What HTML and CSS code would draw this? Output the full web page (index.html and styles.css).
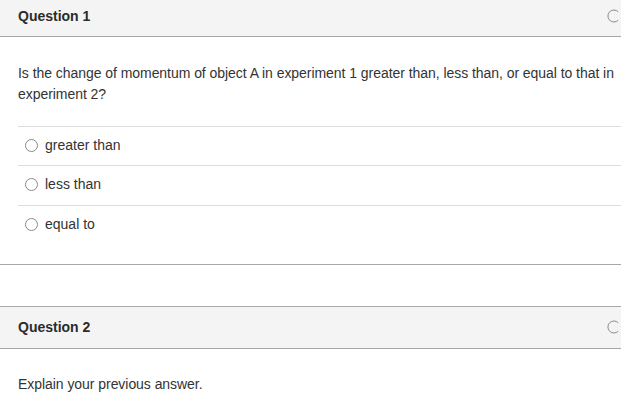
FILE: index.html
```html
<!DOCTYPE html>
<html lang="en">
  <head>
    <meta charset="UTF-8" />
    <title>Quiz</title>
    <link rel="stylesheet" href="styles.css">
  </head>
  <body>
    <div class="question">
      <div class="q-head">
        <span>Question 1</span>
        <svg class="q-icon" width="14" height="14" viewBox="0 0 14 14">
          <path d="M11.2 2.8 A6 6 0 1 0 11.2 11.2" fill="none" stroke="#8a8a8a" stroke-width="1" />
        </svg>
      </div>
      <div class="q-body">
        <p class="q-text">Is the change of momentum of object A in experiment 1 greater than, less than, or equal to that in experiment 2?</p>
        <ul class="options">
          <li class="option"><span class="radio"></span>greater than</li>
          <li class="option"><span class="radio"></span>less than</li>
          <li class="option"><span class="radio"></span>equal to</li>
        </ul>
      </div>
    </div>

    <div class="question second">
      <div class="q-head">
        <span>Question 2</span>
        <svg class="q-icon" width="14" height="14" viewBox="0 0 14 14">
          <path d="M11.2 2.8 A6 6 0 1 0 11.2 11.2" fill="none" stroke="#8a8a8a" stroke-width="1" />
        </svg>
      </div>
      <div class="q-body">
        <p class="q-text">Explain your previous answer.</p>
      </div>
    </div>
  </body>
</html>
```

FILE: styles.css
```css
* {
  margin: 0;
  padding: 0;
  box-sizing: border-box;
}

body {
  font-family: "Liberation Sans", Arial, sans-serif;
  color: #333;
  background: #fff;
  width: 621px;
  overflow: hidden;
}

.question {
  border-bottom: 1px solid #a9a9a9;
}

.question.second {
  margin-top: 41px;
  border-top: 1px solid #a9a9a9;
  border-bottom: none;
}

.q-head {
  height: 37px;
  background: #f4f4f4;
  border-bottom: 1px solid #a6a6a6;
  display: flex;
  align-items: center;
  justify-content: space-between;
  padding: 0 0 4px 18px;
  font-size: 14px;
  font-weight: bold;
  color: #2b2b2b;
}

.second .q-head {
  height: 42px;
  padding-bottom: 1px;
}

.q-icon {
  flex-shrink: 0;
}

.q-body {
  padding: 26px 0 0 18px;
}

.second .q-body {
  padding-top: 25px;
}

.q-text {
  font-size: 14px;
  line-height: 21px;
  letter-spacing: -0.05px;
}

.options {
  list-style: none;
  margin-top: 21px;
  padding-bottom: 19px;
}

.option {
  display: flex;
  align-items: center;
  height: 40px;
  border-top: 1px solid #dcdcdc;
  font-size: 14px;
  padding: 0 0 3px 7px;
}

.option:first-child {
  height: 39px;
}

.radio {
  width: 13px;
  height: 13px;
  border: 1px solid #8a8a8a;
  border-radius: 50%;
  background: #fff;
  margin: 1px 7px 0 0;
}
```
